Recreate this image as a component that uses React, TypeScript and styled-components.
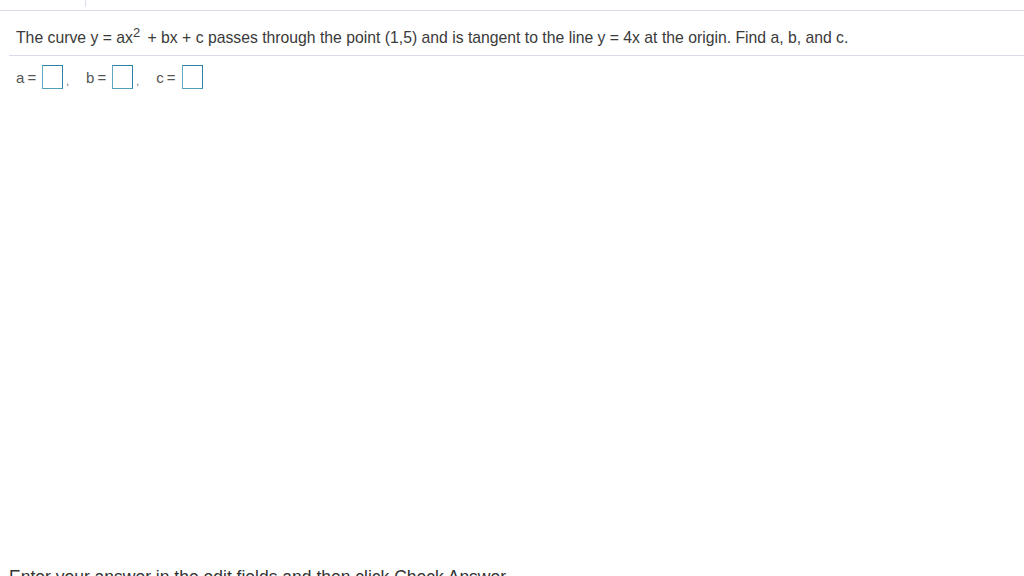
import styled, { createGlobalStyle } from "styled-components";

const Global = createGlobalStyle`
  html, body {
    margin: 0;
    padding: 0;
    background: #fff;
  }
  body {
    font-family: "Liberation Sans", Arial, sans-serif;
    color: #333;
    overflow: hidden;
  }
`;

const answers = ["a", "b", "c"];

function App() {
  return (
    <Page>
      <Global />
      <TopBar>
        <Tab />
      </TopBar>
      <Question>
        The curve y = ax<Sup>2</Sup> + bx + c passes through the point (1,5) and is
        tangent to the line y = 4x at the origin. Find a, b, and c.
      </Question>
      <Divider />
      <AnswerRow>
        {answers.map((name, i) => (
          <Field key={name}>
            <Label>{name} =</Label>
            <Box aria-label={name} />
            {i < answers.length - 1 && <Comma>,</Comma>}
          </Field>
        ))}
      </AnswerRow>
      <Footer>Enter your answer in the edit fields and then click Check Answer.</Footer>
    </Page>
  );
}
export default App;

const Page = styled.div`
  display: flex;
  flex-direction: column;
  height: 576px;
`;

const TopBar = styled.div`
  display: flex;
  height: 10px;
  border-bottom: 1px solid #dcdcea;
`;

const Tab = styled.div`
  width: 85px;
  height: 7px;
  border-right: 1px solid #dcdcea;
`;

const Question = styled.div`
  padding: 17px 0 0 16px;
  height: 27px;
  font-size: 15.75px;
  line-height: 20px;
  color: #3a3a3a;
  white-space: nowrap;
`;

const Sup = styled.sup`
  font-size: 13px;
  line-height: 0;
  vertical-align: 6px;
  margin-right: 3px;
`;

const Divider = styled.div`
  margin-left: 9px;
  border-top: 1px solid #d8dce6;
`;

const AnswerRow = styled.div`
  display: flex;
  align-items: center;
  gap: 17px;
  padding: 9px 0 0 16px;
`;

const Field = styled.div`
  display: flex;
  align-items: center;
`;

const Label = styled.span`
  font-size: 15px;
  color: #555;
  margin-right: 6px;
  word-spacing: -1px;
`;

const Box = styled.input`
  box-sizing: border-box;
  width: 21px;
  height: 24px;
  margin: 0;
  padding: 0;
  border: 1px solid #2b84a6;
  border-left-color: #5ea8c4;
  border-bottom-color: #4f9fbd;
  background: #fff;
  outline: none;
`;

const Comma = styled.span`
  font-size: 10px;
  color: #666;
  align-self: flex-end;
  margin-left: 3px;
  margin-bottom: 2px;
`;

const Footer = styled.div`
  margin-top: auto;
  margin-bottom: -11px;
  padding-left: 9px;
  font-size: 17.5px;
  line-height: 20px;
  color: #333;
  white-space: nowrap;
`;
